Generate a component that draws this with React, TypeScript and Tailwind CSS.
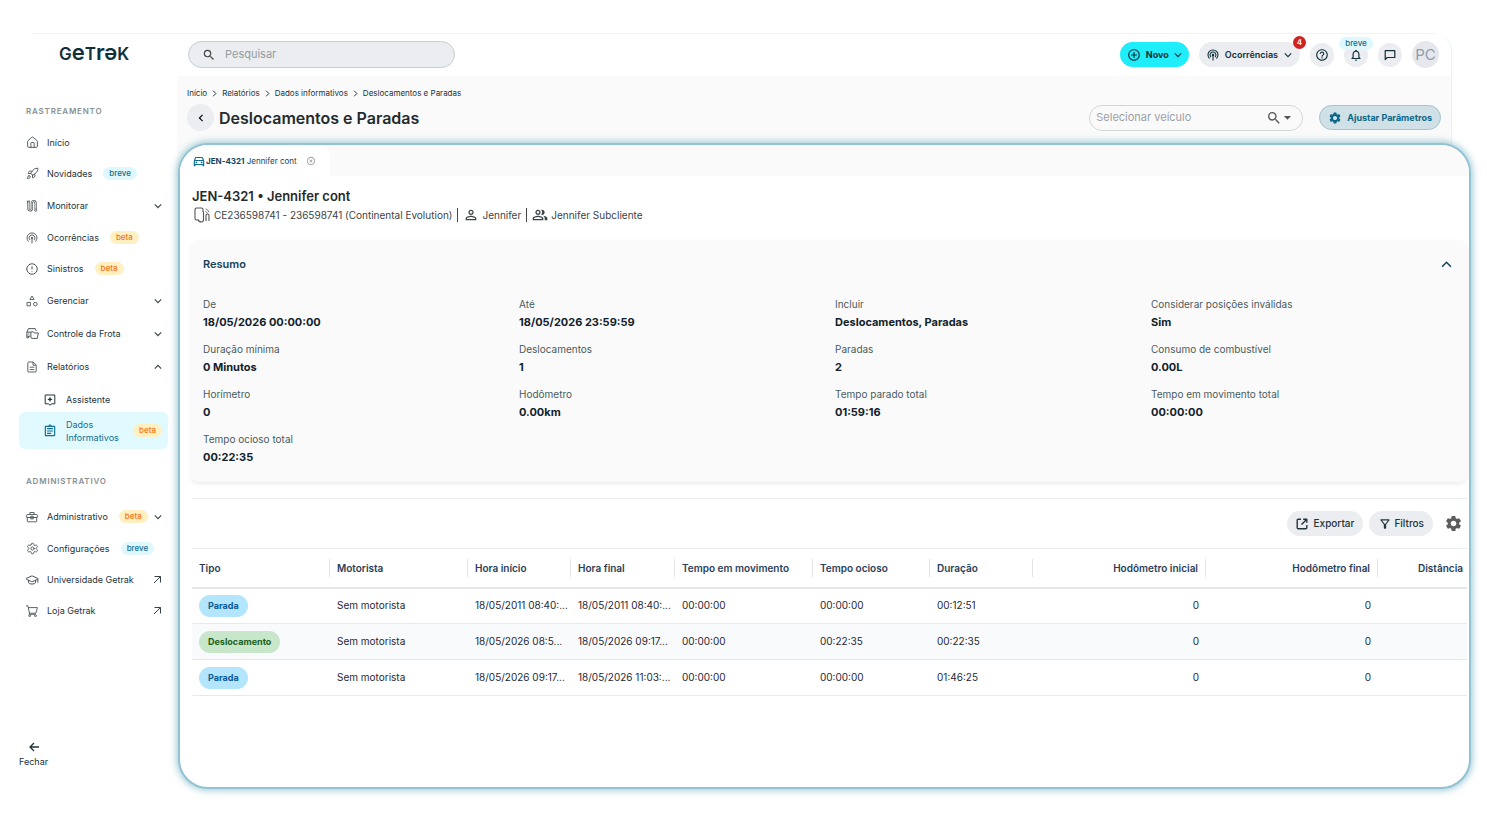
import { useState } from "react"
import type { ReactNode } from "react"
import { GraduationCap, House, Rocket, Settings } from "lucide-react"
import {
  MdAddCircleOutline, MdArrowDropDown, MdHelpOutline, MdHighlightOff, MdNotificationsNone, MdOutlineAssignment,
  MdOutlineDirectionsCar, MdOutlineFilterAlt, MdOutlinePeopleAlt, MdPersonOutline, MdSearch, MdSettings,
} from "react-icons/md"
import { TbAlertCircle } from "react-icons/tb"

const RESUMO: [string, string][] = [
  ["De", "18/05/2026 00:00:00"],
  ["Até", "18/05/2026 23:59:59"],
  ["Incluir", "Deslocamentos, Paradas"],
  ["Considerar posições inválidas", "Sim"],
  ["Duração mínima", "0 Minutos"],
  ["Deslocamentos", "1"],
  ["Paradas", "2"],
  ["Consumo de combustível", "0.00L"],
  ["Horímetro", "0"],
  ["Hodômetro", "0.00km"],
  ["Tempo parado total", "01:59:16"],
  ["Tempo em movimento total", "00:00:00"],
  ["Tempo ocioso total", "00:22:35"],
]

const COLUMNS = [
  { label: "Tipo", width: "w-[138px]" },
  { label: "Motorista", width: "w-[138px]" },
  { label: "Hora início", width: "w-[103px]" },
  { label: "Hora final", width: "w-[104px]" },
  { label: "Tempo em movimento", width: "w-[138px]" },
  { label: "Tempo ocioso", width: "w-[117px]" },
  { label: "Duração", width: "w-[103px]" },
  { label: "Hodômetro inicial", width: "w-[173px]", right: true },
  { label: "Hodômetro final", width: "w-[172px]", right: true },
  { label: "Distância", width: "", right: true },
]

const ROWS = [
  ["Parada", "Sem motorista", "18/05/2011 08:40:...", "18/05/2011 08:40:...", "00:00:00", "00:00:00", "00:12:51", "0", "0", ""],
  ["Deslocamento", "Sem motorista", "18/05/2026 08:5...", "18/05/2026 09:17...", "00:00:00", "00:22:35", "00:22:35", "0", "0", ""],
  ["Parada", "Sem motorista", "18/05/2026 09:17...", "18/05/2026 11:03:...", "00:00:00", "00:00:00", "01:46:25", "0", "0", ""],
]

const BREADCRUMB = ["Início", "Relatórios", "Dados informativos", "Deslocamentos e Paradas"]

function Chevron({ dir = "down", size = 8 }: { dir?: "down" | "up" | "left" | "right"; size?: number }) {
  const d = { down: "M1 3l4 4 4-4", up: "M1 7l4-4 4 4", left: "M7 1L3 5l4 4", right: "M3 1l4 4-4 4" }[dir]
  return (
    <svg width={size} height={size} viewBox="0 0 10 10" fill="none" stroke="currentColor" strokeWidth="1.400" className="shrink-0">
      <path d={d} />
    </svg>
  )
}

function Glyph({ size = 12, weight = 1, children }: { size?: number; weight?: number; children: ReactNode }) {
  return (
    <svg width={size} height={size} viewBox="0 0 12 12" fill="none" stroke="currentColor" strokeWidth={weight} strokeLinejoin="round" className="shrink-0">
      {children}
    </svg>
  )
}

function RouteIcon() {
  return (
    <Glyph weight={0.9}>
      <path d="M.8 1.200h3.200M1.600 1.200v2.600M3.200 1.200v2.600" />
      <path d="M2.400 3.500v5.200a1.600 1.600 0 0 0 3.400 0V3a1.900 1.900 0 0 1 3.800 0v6" strokeWidth="2.200" />
      <path d="M2.400 3v5.700a1.600 1.600 0 0 0 3.400 0V3a1.900 1.900 0 0 1 3.800 0v6.200" stroke="white" strokeWidth=".8" />
      <circle cx="9.700" cy="10.200" r="1.100" />
    </Glyph>
  )
}

function AntennaIcon({ weight = 0.9 }: { weight?: number }) {
  return (
    <Glyph weight={weight}>
      <path d="M2.600 9.600a5 5 0 1 1 6.800 0M4 8a2.900 2.900 0 1 1 4 0M6 6v5.500" />
      <circle cx="6" cy="5.900" r=".7" fill="currentColor" />
    </Glyph>
  )
}

function ShapesIcon() {
  return (
    <Glyph weight={0.9}>
      <path d="M6 1l2.100 3.600H3.900zM1 7.400h3.400v3.400H1z" />
      <circle cx="9.300" cy="9.100" r="1.800" />
    </Glyph>
  )
}

function FleetIcon() {
  return (
    <Glyph size={13} weight={0.9}>
      <path d="M4 8.500H.8V4.800L2.200 1.500h6.300l1 2M.8 4.800h3.400M2 6.500h1M.8 8.500V10h1.500V8.500" />
      <path d="M4.500 9.500V4.500h2.300l1 1h3.600l-1 5H5.500a1 1 0 0 1-1-1z" />
    </Glyph>
  )
}

function FileIcon() {
  return (
    <Glyph weight={0.9}>
      <path d="M2 1h5.200l3 3v6.200a.8.8 0 0 1-.8.800H2.600a.8.8 0 0 1-.8-.8V1.500M7 1v3.200h3M3.700 6.200h4.600M3.700 8.600h4.600" />
    </Glyph>
  )
}

function AssistantIcon() {
  return (
    <Glyph weight={1}>
      <path d="M1.200 1h9.600v8.800H7.400L6 11.300 4.600 9.800H1.200z" />
      <path d="M6 2.700l.8 1.900 1.900.8-1.900.8L6 8.100l-.8-1.900-1.900-.8 1.900-.8z" fill="currentColor" stroke="none" />
    </Glyph>
  )
}

function BriefcaseIcon() {
  return (
    <Glyph weight={0.9}>
      <path d="M1.500 3.500h9a.8.8 0 0 1 .8.800v2.200H.7V4.300a.8.8 0 0 1 .8-.8zM3.900 3.300V1.500h4.200v1.800M1.300 6.500v3.700a.6.6 0 0 0 .6.600h8.200a.6.6 0 0 0 .6-.6V6.500M4.700 5.300h2.600v2.600H4.700z" />
    </Glyph>
  )
}

function CartIcon() {
  return (
    <Glyph weight={0.9}>
      <path d="M0 .8h1.900l1.600 7.400h6.400l1.500-5.600H2.300M3.500 8.200L3 9.300h7" />
      <circle cx="3.700" cy="10.700" r=".9" />
      <circle cx="9.500" cy="10.700" r=".9" />
    </Glyph>
  )
}

function TrackerIcon() {
  return (
    <svg width="16" height="16" viewBox="0 0 16 16" fill="none" stroke="currentColor" strokeWidth="1.100">
      <path d="M9 5V2.500A1.500 1.500 0 0 0 7.500 1h-5A1.500 1.500 0 0 0 1 2.500v9A1.500 1.500 0 0 0 2.500 13H4" />
      <path d="M4 12.500c.5 1.800 2 2.500 3.500 2.500s2-1 2-2.500V4.500M12 14V8.500a1.500 1.500 0 0 1 3 0V14" />
      <path d="M11.500 4.500a3 3 0 0 1 2 2M11.500 1.800a5 5 0 0 1 3.500 3.500" strokeWidth=".8" />
    </svg>
  )
}

function ExternalIcon() {
  return (
    <svg width="9" height="9" viewBox="0 0 9 9" fill="none" stroke="currentColor" strokeWidth="1">
      <path d="M1.500 1.500h6v6M7.500 1.500L1 8" />
    </svg>
  )
}

function ExportIcon() {
  return (
    <Glyph weight={1.4}>
      <path d="M5 1.200H2.200a1 1 0 0 0-1 1v7.600a1 1 0 0 0 1 1h7.600a1 1 0 0 0 1-1V7M7.200 1.200h3.600v3.600M10.600 1.400L5.500 6.500" />
    </Glyph>
  )
}

function ChatIcon() {
  return (
    <Glyph weight={1.2}>
      <path d="M1.200 10.500V1.700h9.600v6.800H3.200z" />
    </Glyph>
  )
}

function Tag({ kind }: { kind: "beta" | "breve" }) {
  const tone = kind === "beta" ? "bg-[#fff0c2] text-[#f97316]" : "bg-[#dff8fe] text-[#0f6f92]"
  return <span className={`block rounded-full px-[6px] text-[8px] leading-[13px] font-medium ${tone}`}>{kind}</span>
}

function NavItem({ icon, label, tag, group, open, external }: {
  icon: ReactNode; label: string; tag?: "beta" | "breve"; group?: boolean; open?: boolean; external?: boolean
}) {
  const body = (
    <>
      <span className="flex w-[14px] shrink-0 justify-center text-[#4b5357]">{icon}</span>
      <span className="ml-2 whitespace-nowrap">{label}</span>
      {tag && <span className="ml-[11px]"><Tag kind={tag} /></span>}
      <span className="ml-auto text-[#3a4448]">
        {group && <Chevron dir={open ? "up" : "down"} />}
        {external && <ExternalIcon />}
      </span>
    </>
  )
  return group
    ? <button type="button" className="flex h-[33px] w-full items-center pr-[15px] pl-[25px]">{body}</button>
    : <a href="#" className="flex h-[31px] items-center pr-[15px] pl-[25px]">{body}</a>
}

function Sidebar() {
  return (
    <nav className="flex w-[177px] shrink-0 flex-col text-[9px] text-[#22343b]">
      <a href="#" aria-label="Getrak" className="ml-[59px] mt-[6px] flex h-[25px] items-baseline font-semibold text-[#12303a]">
        <span className="text-[17px] leading-6">G</span>
        <span className="text-[22px] leading-6">e</span>
        <span className="text-[17px] leading-6">T</span>
        <span className="text-[22px] leading-6">rə</span>
        <span className="text-[17px] leading-6">K</span>
      </a>

      <h2 className="mt-10 mb-[10px] pl-[26px] text-[8px] leading-3 font-semibold tracking-widest text-[#8a8f92]">RASTREAMENTO</h2>
      <NavItem icon={<House size={13} strokeWidth={1.7} className="shrink-0" />} label="Início" />
      <NavItem icon={<Rocket size={13} strokeWidth={1.7} className="shrink-0" />} label="Novidades" tag="breve" />
      <NavItem icon={<RouteIcon />} label="Monitorar" group />
      <NavItem icon={<AntennaIcon />} label="Ocorrências" tag="beta" />
      <NavItem icon={<TbAlertCircle size={14} strokeWidth={1.7} className="shrink-0" />} label="Sinistros" tag="beta" />
      <NavItem icon={<ShapesIcon />} label="Gerenciar" group />
      <NavItem icon={<FleetIcon />} label="Controle da Frota" group />
      <NavItem icon={<FileIcon />} label="Relatórios" group open />

      <a href="#" className="mt-1 flex h-[25px] items-center pl-11">
        <AssistantIcon />
        <span className="ml-[10px]">Assistente</span>
      </a>
      <a href="#" className="ml-[19px] mr-[9px] flex h-[37px] items-center rounded-md bg-[#e0faff] pl-6 text-[#0f6f92]">
        <MdOutlineAssignment size={14} />
        <span className="ml-[9px] flex-1 leading-[13px]">Dados<br />Informativos</span>
        <span className="mr-[6px]"><Tag kind="beta" /></span>
      </a>

      <h2 className="mt-[26px] mb-[13px] pl-[26px] text-[8px] leading-3 font-semibold tracking-widest text-[#8a8f92]">ADMINISTRATIVO</h2>
      <NavItem icon={<BriefcaseIcon />} label="Administrativo" tag="beta" group />
      <NavItem icon={<Settings size={13} strokeWidth={1.7} className="shrink-0" />} label="Configurações" tag="breve" />
      <NavItem icon={<GraduationCap size={14} strokeWidth={1.7} className="shrink-0" />} label="Universidade Getrak" external />
      <NavItem icon={<CartIcon />} label="Loja Getrak" external />

      <button type="button" className="mt-auto mb-[49px] ml-[19px] flex flex-col items-center self-start">
        <svg width="10" height="10" viewBox="0 0 10 10" fill="none" stroke="currentColor" strokeWidth="1.300" className="mb-[3px]">
          <path d="M5 1L1 5l4 4M1 5h9" />
        </svg>
        <span className="leading-[14px]">Fechar</span>
      </button>
    </nav>
  )
}

function TopBar() {
  const [query, setQuery] = useState("")
  const round = "relative flex size-6 items-center justify-center rounded-full bg-[#ebedf0]"
  return (
    <header className="flex h-[42px] items-center rounded-tr-[18px] border-r border-[#e6f5fb] pr-3 pb-px pl-[11px] text-[9px] text-[#12303a]">
      <label className="flex h-[27px] w-[267px] items-center rounded-full border border-[#c9cdd1] bg-[#ebedf0] pl-[13px]">
        <MdSearch size={14} className="text-[#444]" />
        <input
          aria-label="Pesquisar"
          placeholder="Pesquisar"
          value={query}
          onChange={e => setQuery(e.target.value)}
          className="ml-[9px] min-w-0 flex-1 bg-transparent text-[11px] outline-none placeholder:text-[#949ca1]"
        />
      </label>

      <div className="ml-auto flex items-center gap-[10px]">
        <button type="button" className="flex h-[25px] items-center gap-[5px] rounded-full bg-[#1fedfa] px-[7px] font-bold">
          <MdAddCircleOutline size={14} />
          Novo
          <Chevron />
        </button>
        <button type="button" className="relative flex h-[25px] items-center gap-[6px] rounded-full bg-[#ebedf0] px-2 font-semibold">
          <AntennaIcon weight={1.1} />
          Ocorrências
          <Chevron />
          <span className="absolute -top-[6px] -right-[6px] size-[13px] rounded-full bg-[#d32020] text-center text-[8px] leading-[13px] text-white">4</span>
        </button>
        <button type="button" aria-label="Ajuda" className={round}><MdHelpOutline size={14} /></button>
        <button type="button" aria-label="Notificações" className={round}>
          <MdNotificationsNone size={14} />
          <span className="absolute -top-[6px] left-1/2 -translate-x-1/2"><Tag kind="breve" /></span>
        </button>
        <button type="button" aria-label="Mensagens" className={round}><ChatIcon /></button>
        <button type="button" className="size-[27px] rounded-full bg-[#e6e8ee] text-[15px] leading-[27px] text-[#8f9bb0]">PC</button>
      </div>
    </header>
  )
}

function PageHeader() {
  return (
    <div className="border-r border-[#e6f5fb] bg-[#fafafa] px-[10px] pt-[11px] pb-[46px]">
      <ol className="flex h-3 items-center text-[8px] leading-3 text-[#22343b]">
        {BREADCRUMB.map((item, i) => (
          <li key={item} className="flex items-center">
            {i > 0 && <span className="mx-1"><Chevron dir="right" size={7} /></span>}
            <a href="#">{item}</a>
          </li>
        ))}
      </ol>
      <div className="mt-[5px] flex items-center">
        <button type="button" aria-label="Voltar" className="flex size-[27px] items-center justify-center rounded-full bg-[#ebedf0]">
          <Chevron dir="left" />
        </button>
        <h1 className="ml-[5px] text-[16px] leading-[22px] font-semibold text-[#262a2c]">Deslocamentos e Paradas</h1>
        <label className="ml-auto flex h-[26px] w-[214px] items-center rounded-full border border-[#d3d6d8] px-[6px]">
          <input aria-label="Selecionar veículo" placeholder="Selecionar veículo" className="min-w-0 flex-1 bg-transparent text-[11px] outline-none placeholder:text-[#9aa1a5]" />
          <MdSearch size={16} className="text-[#555]" />
          <MdArrowDropDown size={17} className="-ml-[3px] text-[#555]" />
        </label>
        <button type="button" className="ml-4 flex h-[25px] items-center gap-[5px] rounded-full border border-[#a3c4d1] bg-[#d0e0e7] px-2 text-[9px] font-bold text-[#0b6688]">
          <MdSettings size={14} />
          Ajustar Parâmetros
        </button>
      </div>
    </div>
  )
}

function Resumo() {
  const [open, setOpen] = useState(true)
  return (
    <section className="mt-4 rounded-lg bg-[#fafafa] pt-3 pb-4 pl-3 shadow-[0_2px_4px_rgba(0,0,0,0.08)]">
      <button type="button" onClick={() => setOpen(!open)} className="flex h-6 w-full items-center justify-between pr-[15px] text-[11px] font-semibold text-[#174459]">
        Resumo
        <Chevron dir={open ? "up" : "down"} size={11} />
      </button>
      {open && (
        <dl className="mt-[19px] grid grid-cols-4 gap-y-[9px]">
          {RESUMO.map(([label, value]) => (
            <div key={label} className="leading-[18px]">
              <dt className="text-[10px] text-[#4a5a60]">{label}</dt>
              <dd className="text-[11px] font-bold text-[#12222a]">{value}</dd>
            </div>
          ))}
        </dl>
      )}
    </section>
  )
}

function TripsTable() {
  return (
    <table className="w-full table-fixed border-collapse text-[10px] text-[#1f2937]">
      <thead>
        <tr className="h-[39px] border-t border-b-2 border-t-[#eceded] border-b-[#e5e6e7] text-[#2c3e57]">
          {COLUMNS.map((c, i) => (
            <th key={c.label} className={`${c.width} p-0 font-semibold ${c.right ? "text-right" : "text-left"}`}>
              <div className={`truncate leading-[18px] ${i < COLUMNS.length - 1 ? "border-r border-[#e2e4e6] px-[7px]" : "pr-1"}`}>{c.label}</div>
            </th>
          ))}
        </tr>
      </thead>
      <tbody>
        {ROWS.map((row, r) => (
          <tr key={r} className="h-9 border-b border-[#e7e9eb] even:bg-[#f9fafc]">
            {row.map((cell, i) => (
              <td key={i} className={`truncate py-0 ${COLUMNS[i].right ? "pr-[7px] text-right" : "pl-[7px]"}`}>
                {i === 0 ? (
                  <span className={`inline-block rounded-full px-[9px] align-middle text-[9px] leading-[22px] font-bold ${cell === "Parada" ? "bg-[#b3e5fc] text-[#0c5a94]" : "bg-[#c8e6c9] text-[#1b5e20]"}`}>{cell}</span>
                ) : cell}
              </td>
            ))}
          </tr>
        ))}
      </tbody>
    </table>
  )
}

export default function App() {
  const pill = "flex h-[25px] items-center rounded-full bg-[#ebedf0] font-medium"
  return (
    <div className="flex min-h-screen flex-col bg-white pt-[33px] font-['Inter',sans-serif]">
      <div className="mr-[52px] ml-8 h-px bg-[#eaf5fa]" />
      <div className="flex flex-1">
        <Sidebar />
        <main className="flex min-w-0 flex-1 flex-col">
          <div className="mr-[35px]">
            <TopBar />
            <PageHeader />
          </div>

          <div className="relative -mt-[34px] mr-4 mb-[29px] ml-px flex-1 overflow-hidden rounded-[30px] border-2 border-[#93c3d3] bg-white shadow-[0_0_6px_2px_rgba(88,163,188,0.5)]">
            <div className="flex h-[31px] items-end bg-[#fafafa]">
              <div className="flex h-[29px] w-[150px] items-center rounded-tr-lg bg-white pb-[2px] pl-3 text-[8px] text-[#174459]">
                <MdOutlineDirectionsCar size={14} className="shrink-0 text-[#0f6f92]" />
                <span><b className="font-bold">JEN-4321</b> Jennifer cont</span>
                <button type="button" aria-label="Fechar aba" className="ml-[9px] text-[#a0a0a0]"><MdHighlightOff size={10} /></button>
              </div>
            </div>

            <div className="pt-[10px] pr-[2px] pl-[11px]">
              <h2 className="ml-px text-[13px] leading-5 font-semibold text-[#262a2c]">JEN-4321 • Jennifer cont</h2>
              <div className="ml-[3px] flex h-[18px] items-center text-[10px] text-[#3c4448]">
                <span className="text-[#555]"><TrackerIcon /></span>
                <span className="ml-1">CE236598741 - 236598741 (Continental Evolution)</span>
                <span className="mx-[5px] h-[14px] w-px bg-[#444]" />
                <MdPersonOutline size={16} />
                <span className="ml-[3px]">Jennifer</span>
                <span className="mx-[5px] h-[14px] w-px bg-[#444]" />
                <MdOutlinePeopleAlt size={16} />
                <span className="ml-[3px]">Jennifer Subcliente</span>
              </div>

              <Resumo />

              <div className="ml-px">
                <div className="mt-4 flex h-[50px] items-center justify-end border-t border-[#ebecec] pr-1 text-[10px] text-[#22343b]">
                  <button type="button" className={`${pill} gap-[6px] px-[9px]`}><ExportIcon />Exportar</button>
                  <button type="button" className={`${pill} ml-[6px] gap-[2px] px-[9px]`}><MdOutlineFilterAlt size={14} />Filtros</button>
                  <button type="button" aria-label="Configurar colunas" className="ml-[11px] text-[#5c5c5c]"><MdSettings size={19} /></button>
                </div>

                <TripsTable />
              </div>
            </div>
          </div>
        </main>
      </div>
    </div>
  )
}
